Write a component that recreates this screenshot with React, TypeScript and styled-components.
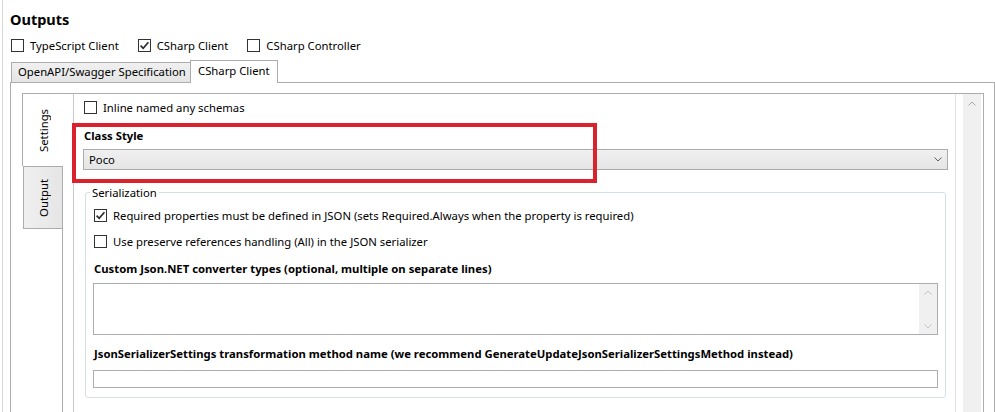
import React from "react";
import styled, { createGlobalStyle } from "styled-components";

const FONT = `"Noto Sans", "Segoe UI", sans-serif`;

const Global = createGlobalStyle`
  html, body { margin: 0; padding: 0; background: #ffffff; overflow: hidden; }
  body { font-family: ${FONT}; font-size: 11.3px; color: #000; }
  * { box-sizing: border-box; }
`;

const Root = styled.div`
  position: relative;
  height: 412px;
  margin-left: 2px;
  border-left: 1px solid #d6d6d6;
  padding: 10px 0 0 7px;
  overflow: hidden;
`;

const Title = styled.div`
  font-weight: 700;
  font-size: 14.5px;
  line-height: 18px;
  height: 18px;
`;

const CheckRow = styled.div`
  display: flex;
  gap: 19px;
  margin-top: 10px;
  padding-left: 1px;
`;

const CheckItem = styled.label`
  display: flex;
  align-items: center;
  gap: 6px;
  height: 15px;
  line-height: 15px;
  white-space: nowrap;
`;

const Box = styled.span`
  width: 13px;
  height: 13px;
  border: 1px solid #333333;
  background: #ffffff;
  flex-shrink: 0;
  display: flex;
  align-items: center;
  justify-content: center;
`;

const TabStrip = styled.div`
  display: flex;
  align-items: flex-start;
  margin-top: 7px;
  padding-left: 1px;
  height: 23px;
`;

const TopTab = styled.div<{ $selected?: boolean; $w: number }>`
  position: relative;
  width: ${(p) => p.$w}px;
  height: ${(p) => (p.$selected ? 23 : 20)}px;
  margin-top: ${(p) => (p.$selected ? 0 : 2)}px;
  margin-left: ${(p) => (p.$selected ? -1 : 0)}px;
  padding: ${(p) => (p.$selected ? "2px 0 0 7px" : "1px 0 0 6px")};
  line-height: 15px;
  border: 1px solid #acacac;
  border-bottom: none;
  background: ${(p) => (p.$selected ? "#ffffff" : "linear-gradient(#f0f0f0, #e5e5e5)")};
  z-index: ${(p) => (p.$selected ? 2 : 0)};
  white-space: nowrap;
`;

const OuterPanel = styled.div`
  margin-top: -1px;
  height: 340px;
  border: 1px solid #acacac;
  padding: 10px 10px 0 11px;
  background: #ffffff;
`;

const InnerTabs = styled.div`
  display: flex;
  height: 100%;
`;

const SideStrip = styled.div`
  width: 41px;
  flex-shrink: 0;
  display: flex;
  flex-direction: column;
`;

const SideTab = styled.div<{ $selected?: boolean; $h: number }>`
  position: relative;
  z-index: ${(p) => (p.$selected ? 2 : 0)};
  width: ${(p) => (p.$selected ? 42 : 40)}px;
  height: ${(p) => p.$h}px;
  margin-left: ${(p) => (p.$selected ? 0 : 1)}px;
  border: 1px solid #acacac;
  border-right: ${(p) => (p.$selected ? "none" : "1px solid #acacac")};
  border-bottom: ${(p) => (p.$selected ? "none" : "1px solid #acacac")};
  background: ${(p) => (p.$selected ? "#ffffff" : "linear-gradient(90deg, #f0f0f0, #e5e5e5)")};
  display: flex;
  align-items: center;
  justify-content: center;
`;

const SideText = styled.span`
  writing-mode: vertical-rl;
  transform: rotate(180deg);
  line-height: 15px;
  white-space: nowrap;
`;

const InnerPanel = styled.div`
  flex: 1;
  margin-left: -1px;
  border: 1px solid #acacac;
  display: flex;
  padding: 0 2px 0 10px;
  background: #ffffff;
`;

const ContentBox = styled.div`
  flex: 1;
  border-left: 1px solid #c9c9c9;
  border-right: 1px solid #e3e3e3;
  padding: 6px 0 0 10px;
  display: flex;
  flex-direction: column;
  align-items: stretch;
`;

const ScrollTrack = styled.div`
  width: 18px;
  margin-left: 7px;
  background: #f0f0f0;
  display: flex;
  justify-content: center;
  padding-top: 7px;
`;

const FieldLabel = styled.div<{ $mt: number }>`
  font-weight: 700;
  line-height: 15px;
  margin-top: ${(p) => p.$mt}px;
  white-space: nowrap;
`;

const Combo = styled.div`
  margin: 6px 7px 0 -1px;
  height: 21px;
  border: 1px solid #acacac;
  background: linear-gradient(#f0f0f0, #e5e5e5);
  display: flex;
  align-items: center;
  justify-content: space-between;
  padding: 0 5px 0 5px;
  line-height: 19px;
`;

const Group = styled.fieldset`
  margin: 15px 9px 0 1px;
  padding: 8px 7px 9px 8px;
  border: 1px solid #d5dfe5;
  border-radius: 3px;
  min-width: 0;
  display: flex;
  flex-direction: column;
`;

const Legend = styled.legend`
  padding: 0 2px;
  margin-left: -4px;
  line-height: 15px;
`;

const GroupCheck = styled(CheckItem)<{ $mt?: number }>`
  margin-top: ${(p) => p.$mt ?? 0}px;
`;

const TextArea = styled.div`
  margin: 7px 0 0 -1px;
  height: 52px;
  border: 1px solid #abadb3;
  background: #ffffff;
  display: flex;
  justify-content: flex-end;
`;

const AreaScroll = styled.div`
  width: 18px;
  background: #f0f0f0;
  display: flex;
  flex-direction: column;
  align-items: center;
  justify-content: space-between;
  padding: 6px 0 5px;
`;

const TextInput = styled.div`
  margin: 9px 0 0 -1px;
  height: 18px;
  border: 1px solid #abadb3;
  background: #ffffff;
`;

const Annotation = styled.div`
  position: absolute;
  left: 69px;
  top: 123px;
  width: 525px;
  height: 60px;
  border: 4px solid #d9222b;
  pointer-events: none;
`;

const Check = ({ checked }: { checked?: boolean }) => (
  <Box>
    {checked && (
      <svg width="11" height="11" viewBox="0 0 11 11">
        <path d="M1.6 5.6 L4.2 8.3 L9.4 2.3" fill="none" stroke="#2b2b2b" strokeWidth="1.7" />
      </svg>
    )}
  </Box>
);

const Chevron = ({ up, color }: { up?: boolean; color: string }) => (
  <svg width="8" height="5" viewBox="0 0 8 5">
    <path d={up ? "M0.5 4.5 L4 1 L7.5 4.5" : "M0.5 0.5 L4 4 L7.5 0.5"} fill="none" stroke={color} strokeWidth="1" />
  </svg>
);

export default function App() {
  return (
    <>
      <Global />
      <Root>
        <Title>Outputs</Title>
        <CheckRow>
          <CheckItem>
            <Check />
            TypeScript Client
          </CheckItem>
          <CheckItem>
            <Check checked />
            CSharp Client
          </CheckItem>
          <CheckItem>
            <Check />
            CSharp Controller
          </CheckItem>
        </CheckRow>
        <TabStrip>
          <TopTab $w={180}>OpenAPI/Swagger Specification</TopTab>
          <TopTab $w={88} $selected>
            CSharp Client
          </TopTab>
        </TabStrip>
        <OuterPanel>
          <InnerTabs>
            <SideStrip>
              <SideTab $selected $h={73}>
                <SideText>Settings</SideText>
              </SideTab>
              <SideTab $h={63}>
                <SideText>Output</SideText>
              </SideTab>
            </SideStrip>
            <InnerPanel>
              <ContentBox>
                <CheckItem>
                  <Check />
                  Inline named any schemas
                </CheckItem>
                <FieldLabel $mt={13}>Class Style</FieldLabel>
                <Combo>
                  <span>Poco</span>
                  <Chevron color="#606060" />
                </Combo>
                <Group>
                  <Legend>Serialization</Legend>
                  <GroupCheck>
                    <Check checked />
                    Required properties must be defined in JSON (sets Required.Always when the property is required)
                  </GroupCheck>
                  <GroupCheck $mt={11}>
                    <Check />
                    Use preserve references handling (All) in the JSON serializer
                  </GroupCheck>
                  <FieldLabel $mt={12}>Custom Json.NET converter types (optional, multiple on separate lines)</FieldLabel>
                  <TextArea>
                    <AreaScroll>
                      <Chevron up color="#c2c2c2" />
                      <Chevron color="#c2c2c2" />
                    </AreaScroll>
                  </TextArea>
                  <FieldLabel $mt={11}>
                    JsonSerializerSettings transformation method name (we recommend GenerateUpdateJsonSerializerSettingsMethod instead)
                  </FieldLabel>
                  <TextInput />
                </Group>
              </ContentBox>
              <ScrollTrack>
                <Chevron up color="#a6a6a6" />
              </ScrollTrack>
            </InnerPanel>
          </InnerTabs>
        </OuterPanel>
        <Annotation />
      </Root>
    </>
  );
}
